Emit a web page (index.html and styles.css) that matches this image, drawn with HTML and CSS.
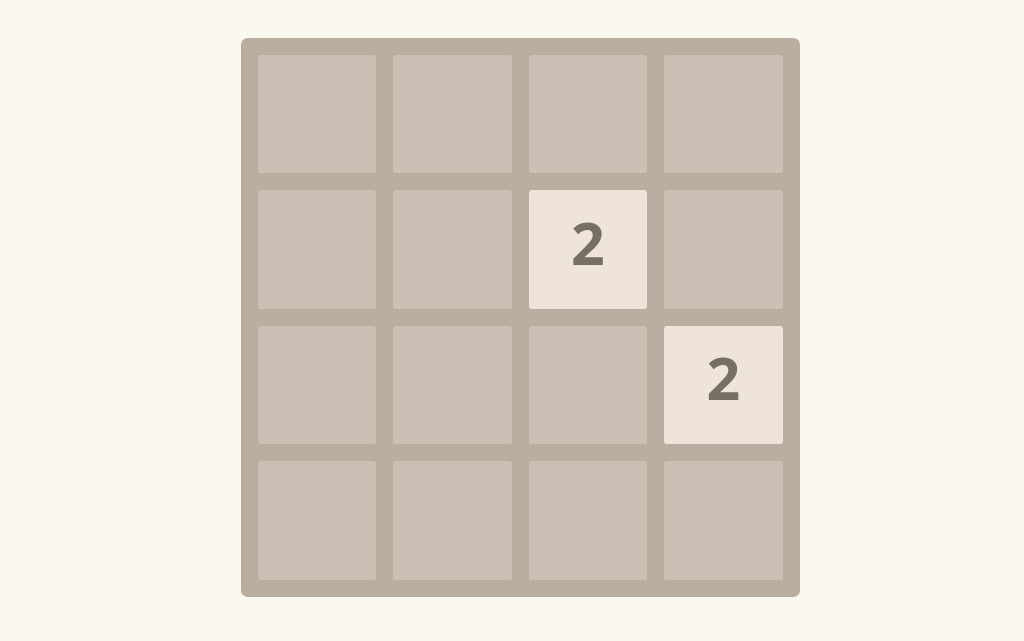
FILE: index.html
```html
<!DOCTYPE html>
<html lang="en">
<head>
<meta charset="utf-8">
<title>2048</title>
<link rel="stylesheet" href="styles.css">
</head>
<body>
  <main class="game">
    <div class="board">
      <div class="cell"></div>
      <div class="cell"></div>
      <div class="cell"></div>
      <div class="cell"></div>

      <div class="cell"></div>
      <div class="cell"></div>
      <div class="cell tile-2">2</div>
      <div class="cell"></div>

      <div class="cell"></div>
      <div class="cell"></div>
      <div class="cell"></div>
      <div class="cell tile-2">2</div>

      <div class="cell"></div>
      <div class="cell"></div>
      <div class="cell"></div>
      <div class="cell"></div>
    </div>
  </main>
</body>
</html>
```

FILE: styles.css
```css
html, body {
  margin: 0;
  padding: 0;
  height: 100%;
}

body {
  background: #faf8ef;
  font-family: "Open Sans", "Liberation Sans", sans-serif;
  color: #776e65;
}

.game {
  padding: 38px 0 0 241px;
}

.board {
  box-sizing: border-box;
  width: 558.5px;
  height: 558.5px;
  padding: 16.75px;
  display: grid;
  grid-template-columns: repeat(4, 1fr);
  grid-template-rows: repeat(4, 1fr);
  gap: 16.75px;
  background: #bbada0;
  border-radius: 6.7px;
}

.cell {
  background: rgba(238, 228, 218, 0.35);
  border-radius: 3.35px;
  display: flex;
  align-items: center;
  justify-content: center;
}

.tile-2 {
  background: #eee4da;
  color: #776e65;
  font-weight: 700;
  font-size: 59px;
  line-height: 1;
  padding-bottom: 14px;
  box-sizing: border-box;
}
```
